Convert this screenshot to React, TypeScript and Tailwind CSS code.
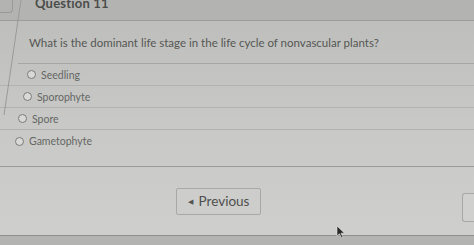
import { useState } from "react";

const options = [
  { label: "Seedling", pad: "pl-[27px]" },
  { label: "Sporophyte", pad: "pl-[23px]" },
  { label: "Spore", pad: "pl-[18px]" },
  { label: "Gametophyte", pad: "pl-[15px]" },
];

export default function App() {
  const [picked, setPicked] = useState<string | null>(null);

  return (
    <div className="relative w-[474px] h-[245px] overflow-hidden flex flex-col bg-linear-to-b from-[#bcbdba] via-[#c8c9c6] to-[#cfd0cd] font-['Lato','Open_Sans',sans-serif] text-[#5d5e5c]">
      {/* header band */}
      <div className="h-[21px] shrink-0 flex items-start bg-[#b3b4b1] border-b border-[#9c9d9a]">
        <div className="w-[13px] h-[13px] border-r border-b border-[#999a97] rounded-br-[4px]" />
        <span className="ml-[22px] -mt-[5px] text-[13px] leading-[16px] font-bold text-[#4b4c4a] tracking-[0.2px]">
          Question 11
        </span>
      </div>

      {/* question */}
      <div className="h-[43px] shrink-0 pt-[15px] ml-[18px] border-b border-[#a6a7a4]">
        <p className="text-[11.5px] leading-[14px] ml-[11px] text-[#555654]">
          What is the dominant life stage in the life cycle of nonvascular plants?
        </p>
      </div>

      {/* answers */}
      <div className="flex flex-col shrink-0">
        {options.map((o, i) => (
          <label
            key={o.label}
            className={`h-[22px] flex items-center gap-[5px] cursor-pointer ${o.pad} ${
              i < options.length - 1 ? "border-b border-[#b2b3b0]" : ""
            }`}
            onClick={() => setPicked(o.label)}
          >
            <span className="w-[9px] h-[9px] rounded-full border border-[#7b7c7a] bg-[#d9dad7] flex items-center justify-center">
              {picked === o.label && <span className="w-[4px] h-[4px] rounded-full bg-[#4b4c4a]" />}
            </span>
            <span className="text-[10.5px] leading-[12px] text-[#656664]">{o.label}</span>
          </label>
        ))}
      </div>

      {/* nav */}
      <div className="mt-[14px] h-[69px] shrink-0 border-t border-[#9a9b98] flex items-start pt-[21px]">
        <button className="ml-[176px] w-[85px] h-[27px] flex items-center justify-center gap-[6px] bg-[#cdcecb] border border-[#a8a9a6] rounded-[2px] text-[13.5px] text-[#4e4f4d]">
          <span className="text-[7px] text-[#555]">◀</span>
          <span>Previous</span>
        </button>
        <div className="ml-auto mt-[5px] w-[12px] h-[29px] border border-r-0 border-[#a8a9a6] rounded-l-[3px] bg-[#d0d1ce]" />
      </div>

      <div className="flex-1 border-t border-[#8f908d] bg-[#b3b4b1]" />

      {/* photographed edge of the page frame */}
      <svg className="absolute left-0 top-0 pointer-events-none" width="40" height="245">
        <line x1="21" y1="0" x2="4" y2="115" stroke="#9a9b98" strokeWidth="1" />
      </svg>

      {/* mouse cursor */}
      <svg className="absolute left-[336px] top-[225px] pointer-events-none" width="10" height="14" viewBox="0 0 10 14">
        <path d="M1 1 L1 11 L3.5 8.8 L5.5 13 L7 12.3 L5 8.2 L8.5 8.2 Z" fill="#2a2a2a" stroke="#e8e8e8" strokeWidth="0.6" />
      </svg>
    </div>
  );
}
